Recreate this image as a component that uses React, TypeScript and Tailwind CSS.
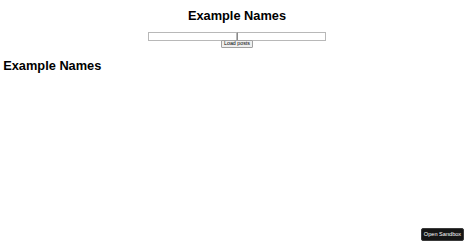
import React from "react";

export default function App() {
  return (
    <div className="relative h-[248px] w-[474px] overflow-hidden bg-white font-['Liberation_Sans',Arial,sans-serif] text-black">
      <div className="flex flex-col px-[3.2px]">
        <h1 className="mt-[9.3px] mb-[7.9px] text-center text-[12.8px] font-bold leading-[14.7px]">
          Example Names
        </h1>
        <div className="flex justify-center">
          <input
            type="text"
            className="box-border h-[9px] w-[89px] border border-[#b8b8b8] bg-white outline-none"
          />
          <input
            type="text"
            className="box-border h-[9px] w-[89px] border border-[#b8b8b8] border-l-[#8a8a8a] bg-white outline-none"
          />
        </div>
        <div className="-mt-[1px] flex justify-center">
          <button className="box-border flex h-[8px] w-[32px] items-center justify-center rounded-[1px] border border-[#a0a0a0] bg-[#efefef] text-[5.3px] leading-none text-black">
            Load posts
          </button>
        </div>
        <h1 className="mt-[11.6px] text-left text-[12.8px] font-bold leading-[14.7px]">
          Example Names
        </h1>
      </div>
      <button className="absolute right-[10px] bottom-[7px] box-border flex h-[13px] w-[43px] items-center justify-center rounded-[2px] border border-[#3a3a3a] bg-[#151515] text-[5.6px] leading-none text-white">
        Open Sandbox
      </button>
    </div>
  );
}
